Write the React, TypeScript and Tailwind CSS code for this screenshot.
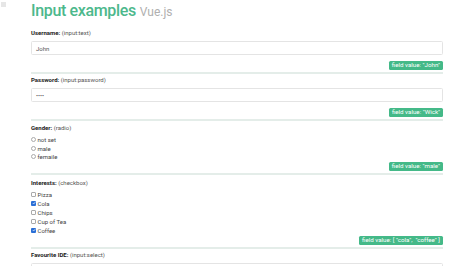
import React from "react";

const font = { fontFamily: "Roboto, 'Liberation Sans', sans-serif" };

function Badge({ children }: { children: React.ReactNode }) {
  return (
    <div className="flex justify-end h-[9px]">
      <span className="h-[9px] px-[3px] rounded-[1.5px] bg-[#44b988] text-white text-[6.2px] leading-[9px] whitespace-pre">
        {children}
      </span>
    </div>
  );
}

function Sep() {
  return <div className="h-[2px] bg-[#e4ede9]" />;
}

function Label({ b, n }: { b: string; n: string }) {
  return (
    <div className="h-[8px] leading-[8px] text-[6px] text-[#222] whitespace-pre">
      <span className="font-bold">{b}</span> <span className="text-[#555]">{n}</span>
    </div>
  );
}

function Input({ v }: { v: string }) {
  return (
    <div className="h-[14px] border border-[#e4e4e4] rounded-[1.5px] px-[4px] flex items-center text-[6px] text-[#555]">
      {v}
    </div>
  );
}

function Radio({ label }: { label: string }) {
  return (
    <div className="h-[8.5px] flex items-center gap-[1.5px] text-[6px] text-[#444]">
      <span className="w-[5px] h-[5px] rounded-full border border-[#aaa] bg-white" />
      <span>{label}</span>
    </div>
  );
}

function Check({ label, on }: { label: string; on?: boolean }) {
  return (
    <div className="h-[9px] flex items-center gap-[1.5px] text-[6px] text-[#444]">
      {on ? (
        <span className="w-[5px] h-[5px] rounded-[1px] bg-[#2b6fd6] flex items-center justify-center">
          <svg width="4" height="4" viewBox="0 0 10 10">
            <path d="M2 5.2 L4.2 7.4 L8.2 2.8" stroke="white" strokeWidth="1.8" fill="none" />
          </svg>
        </span>
      ) : (
        <span className="w-[5px] h-[5px] rounded-[1px] border border-[#aaa] bg-white" />
      )}
      <span>{label}</span>
    </div>
  );
}

export default function App() {
  return (
    <div className="relative w-[474px] h-[266px] overflow-hidden bg-white" style={font}>
      <div className="absolute left-[1px] top-[2px] w-[5px] h-[5px] bg-[#e6e6e6]" />
      <div className="ml-[31px] w-[412px]">
        <div className="h-[24px] flex items-baseline gap-[4px] pt-[1px]">
          <span className="text-[16px] leading-[20px] font-medium tracking-[-0.35px] text-[#4cb88c]">
            Input examples
          </span>
          <span className="text-[12px] leading-[20px] text-[#b0b0b0]">Vue.js</span>
        </div>

        <div className="pt-[5px]">
          <Label b="Username:" n="(input:text)" />
          <div className="mt-[4px]"><Input v="John" /></div>
          <div className="mt-[6px]"><Badge>field value: "John"</Badge></div>
          <div className="mt-[2px]"><Sep /></div>
        </div>

        <div className="pt-[2px]">
          <Label b="Password:" n="(input:password)" />
          <div className="mt-[4px]"><Input v="••••" /></div>
          <div className="mt-[6px]"><Badge>field value: "Wick"</Badge></div>
          <div className="mt-[2px]"><Sep /></div>
        </div>

        <div className="pt-[2.5px]">
          <Label b="Gender:" n="(radio)" />
          <div className="mt-[4px]">
            <Radio label="not set" />
            <Radio label="male" />
            <Radio label="femaile" />
          </div>
          <div className="mt-[0.5px]"><Badge>field value: "male"</Badge></div>
          <div className="mt-[2px]"><Sep /></div>
        </div>

        <div className="pt-[4px]">
          <Label b="Interests:" n="(checkbox)" />
          <div className="mt-[3px]">
            <Check label="Pizza" />
            <Check label="Cola" on />
            <Check label="Chips" />
            <Check label="Cup of Tea" />
            <Check label="Coffee" on />
          </div>
          <div className="mt-[1px]"><Badge>field value: [ "cola",  "coffee" ]</Badge></div>
          <div className="mt-[2px]"><Sep /></div>
        </div>

        <div className="pt-[2px]">
          <Label b="Favourite IDE:" n="(input:select)" />
          <div className="mt-[4px]"><Input v="" /></div>
        </div>
      </div>
    </div>
  );
}
